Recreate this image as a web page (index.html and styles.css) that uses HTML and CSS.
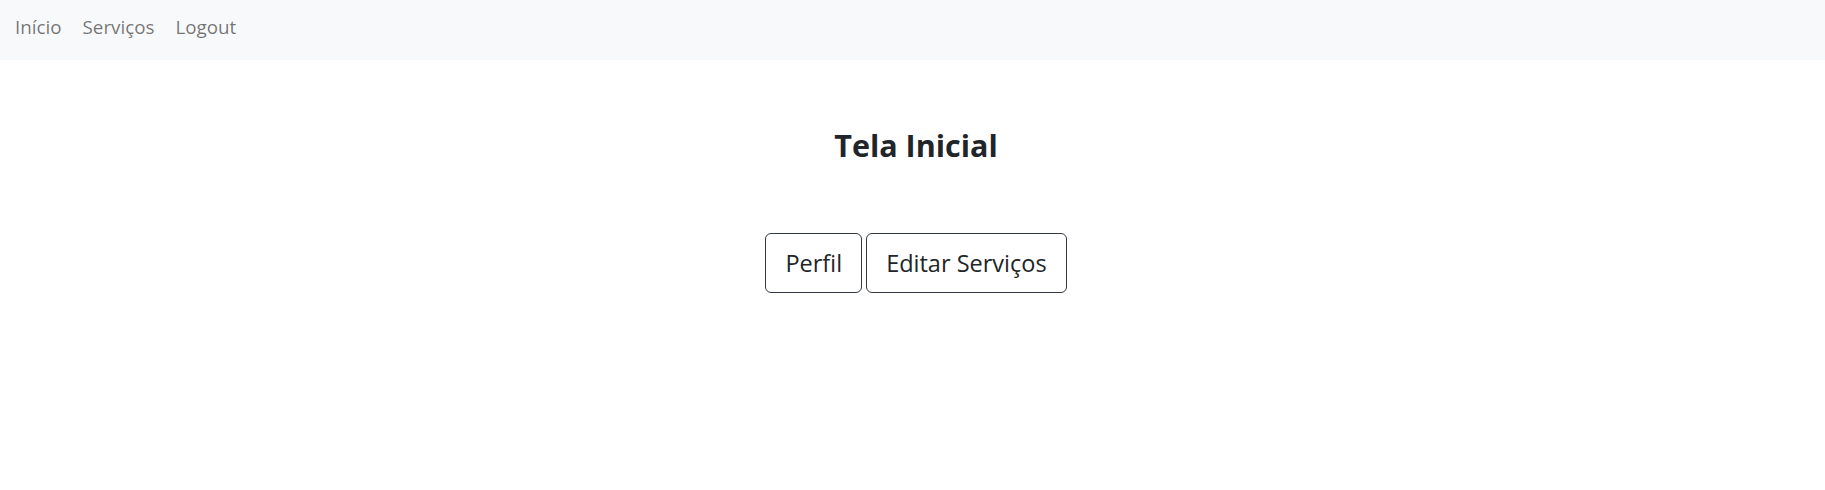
FILE: index.html
```html
<!DOCTYPE html>
<html lang="pt-BR">
<head>
<meta charset="utf-8">
<title>Tela Inicial</title>
<link rel="stylesheet" href="styles.css">
</head>
<body>
<nav class="navbar">
  <a class="nav-link" href="#">Início</a>
  <a class="nav-link" href="#">Serviços</a>
  <a class="nav-link" href="#">Logout</a>
</nav>
<main class="content">
  <h1 class="title">Tela Inicial</h1>
  <div class="actions">
    <button class="btn" type="button">Perfil</button>
    <button class="btn" type="button">Editar Serviços</button>
  </div>
</main>
</body>
</html>
```

FILE: styles.css
```css
* { box-sizing: border-box; }
body {
  margin: 0;
  font-family: "Open Sans", "Noto Sans", sans-serif;
  color: #212529;
  background: #fff;
}
.navbar {
  height: 60px;
  background: #f8f9fa;
  display: flex;
  align-items: center;
  gap: 21px;
  padding: 0 15px 7px;
}
.nav-link {
  font-size: 18.8px;
  line-height: 26px;
  color: rgba(0, 0, 0, 0.55);
  text-decoration: none;
}
.content {
  display: flex;
  flex-direction: column;
  align-items: center;
  padding-top: 67px;
  padding-left: 7px;
}
.title {
  margin: 0;
  font-size: 30.5px;
  line-height: 36px;
  font-weight: 700;
}
.actions {
  margin-top: 70px;
  display: flex;
  gap: 4px;
}
.btn {
  height: 60px;
  padding: 0 19px;
  font-family: inherit;
  font-size: 23.5px;
  color: #212529;
  background: #fff;
  border: 1px solid #343a40;
  border-radius: 6px;
}
```
